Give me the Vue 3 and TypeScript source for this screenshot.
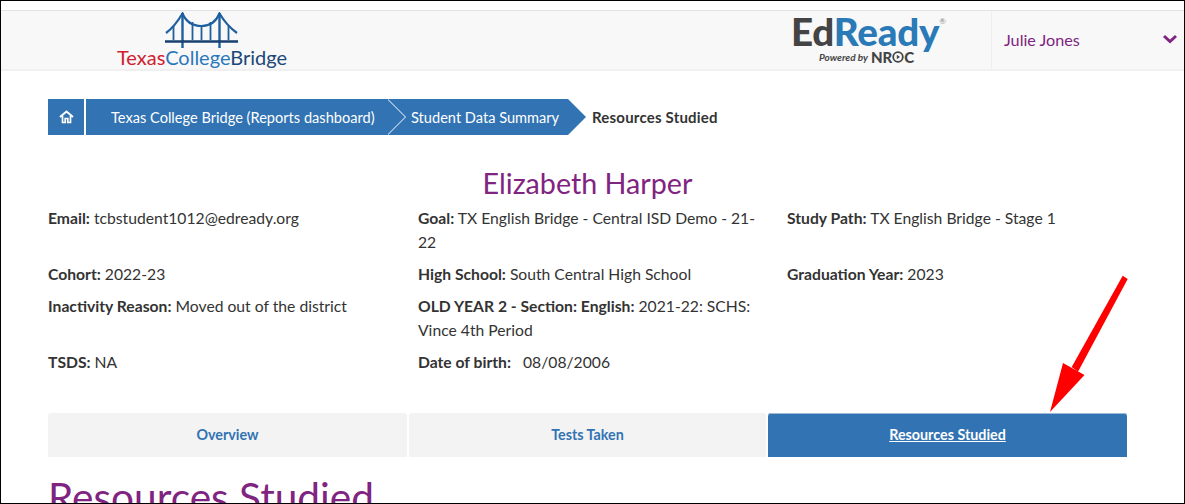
<script setup lang="ts">
import { ref } from 'vue';

interface Field {
  label: string;
  value: string;
}

const crumbs = ['Texas College Bridge (Reports dashboard)', 'Student Data Summary'];

const fields: Field[] = [
  { label: 'Email:', value: 'tcbstudent1012@edready.org' },
  { label: 'Goal:', value: 'TX English Bridge - Central ISD Demo - 21-22' },
  { label: 'Study Path:', value: 'TX English Bridge - Stage 1' },
  { label: 'Cohort:', value: '2022-23' },
  { label: 'High School:', value: 'South Central High School' },
  { label: 'Graduation Year:', value: '2023' },
  { label: 'Inactivity Reason:', value: 'Moved out of the district' },
  { label: 'OLD YEAR 2 - Section: English:', value: '2021-22: SCHS: Vince 4th Period' },
  { label: '', value: '' },
  { label: 'TSDS:', value: 'NA' },
  { label: 'Date of birth:', value: '\u00a0 08/08/2006' },
];

const tabs = ['Overview', 'Tests Taken', 'Resources Studied'];
const activeTab = ref('Resources Studied');
</script>

<template>
  <div class="page">
    <header class="topbar">
      <a class="tcb-logo">
        <svg class="bridge" width="74" height="37" viewBox="0 0 74 37" fill="none" stroke="#1f5f9e">
          <path d="M1 21 C8 16 13 9 17.5 1.5 C22 12 30 14 36.5 14 C43 14 50 12 54.5 1.5 C59 9 65 16 72 21" stroke-width="2.2" />
          <path d="M17.5 1 V36 M54.5 1 V36" stroke-width="2.4" />
          <path d="M8.500 14 V28 M27.500 10 V28 M36.500 13 V28 M45.500 10 V28 M63.500 14 V28" stroke-width="1.8" />
          <path d="M0 29.500 H73" stroke-width="2.4" stroke="#17406f" />
        </svg>
        <span class="tcb-name"><span class="red">Texas</span><span class="mid">College</span><span class="navy">Bridge</span></span>
      </a>
      <a class="edready">
        <span class="ed-word"><span class="ed">Ed</span><span class="ready">Ready</span><sup>®</sup></span>
        <span class="powered">
          <em>Powered by</em>
          <b>NR<svg width="12" height="12" viewBox="0 0 12 12"><circle cx="6" cy="6" r="4.800" fill="none" stroke="#444" stroke-width="1.800" /><path d="M4.800 3.800 L8 6 L4.800 8.200Z" fill="#444" /></svg>C</b>
        </span>
      </a>
      <div class="user">
        <span>Julie Jones</span>
        <svg width="14" height="10" viewBox="0 0 14 10" fill="none" stroke="#7f2480" stroke-width="3">
          <path d="M1 2 L7 7.500 L13 2" />
        </svg>
      </div>
    </header>

    <main class="content">
      <nav class="crumbs">
        <a class="crumb home">
          <svg width="15" height="14" viewBox="0 0 15 14" fill="none" stroke="#fff" stroke-width="2">
            <path d="M1 7 L7.500 1.500 L14 7" />
            <path d="M3.500 6 V12.500 H6.200 V8.500 H8.800 V12.500 H11.500 V6" stroke-width="1.700" />
          </svg>
        </a>
        <a v-for="c in crumbs" :key="c" class="crumb link">{{ c }}</a>
        <span class="current">Resources Studied</span>
      </nav>

      <h2 class="student">Elizabeth Harper</h2>

      <div class="fields">
        <div v-for="(f, i) in fields" :key="i" class="field">
          <b v-if="f.label">{{ f.label }}</b> {{ f.value }}
        </div>
      </div>

      <div class="tabs">
        <a v-for="t in tabs" :key="t" class="tab" :class="{ active: t === activeTab }">{{ t }}</a>
      </div>

      <h1 class="title">Resources Studied</h1>
    </main>

    <svg class="arrow" width="90" height="145" viewBox="0 0 90 145">
      <path d="M83.700 0.700 L88.700 4 L39 96.700 L32.700 92Z" fill="#f00" />
      <path d="M24 88 L45.500 100 L11 137Z" fill="#f00" />
    </svg>
  </div>
</template>

<style>
html,
body {
  margin: 0;
  overflow: hidden;
}
</style>

<style scoped>
.page {
  position: relative;
  box-sizing: border-box;
  width: 1185px;
  height: 504px;
  overflow: hidden;
  border: 1px solid #000;
  background: #fff;
  font-family: Lato, "Open Sans", sans-serif;
  color: #333;
  font-size: 15.700px;
  padding-top: 9px;
}

.topbar {
  display: flex;
  align-items: stretch;
  height: 58px;
  background: #f8f8f8;
  border-top: 1px solid #e2e2e2;
  border-bottom: 2px solid #f0f0f0;
}

.tcb-logo {
  display: flex;
  flex-direction: column;
  align-items: center;
  width: 170px;
  margin-left: 116px;
  padding-top: 1px;
}

.bridge {
  display: block;
  margin-bottom: -3px;
}

.tcb-name {
  font-size: 20px;
  line-height: 22px;
  font-weight: 400;
  white-space: nowrap;
}

.red { color: #cf2030; }
.mid { color: #2b78bb; }
.navy { color: #1c4778; }

.edready {
  display: flex;
  flex-direction: column;
  margin-left: 504px;
  width: 200px;
}

.ed-word {
  font-size: 38.500px;
  line-height: 36px;
  font-weight: 900;
  letter-spacing: -0.2px;
  white-space: nowrap;
  margin-top: 2px;
}

.ed-word sup {
  font-size: 8px;
  font-weight: 400;
  color: #888;
  vertical-align: 22px;
  line-height: 0;
}

.ed { color: #444; }
.ready { color: #2a7ab8; }

.powered {
  display: flex;
  align-items: center;
  gap: 3px;
  margin: 1px 0 0 28px;
  color: #444;
  line-height: 14px;
}

.powered em {
  font-size: 10px;
  font-weight: 700;
}

.powered b {
  display: flex;
  align-items: center;
  font-size: 15px;
  font-weight: 900;
}

.user {
  display: flex;
  align-items: center;
  justify-content: space-between;
  flex: 1;
  padding: 0 7px 2px 12px;
  border-left: 1px solid #eee;
  color: #7f2480;
  font-size: 16.200px;
  font-weight: 400;
}

.content {
  padding: 28px 57px 0 47px;
}

.crumbs {
  display: flex;
  align-items: center;
  height: 36px;
  font-size: 14.600px;
}

.crumb {
  display: flex;
  align-items: center;
  height: 36px;
  background: #3173b3;
  color: #fff;
}

.home {
  justify-content: center;
  width: 36px;
  margin-right: 2px;
}

.link {
  position: relative;
  white-space: nowrap;
  padding-right: 10px;
}

.link:nth-of-type(2) {
  width: 301px;
  box-sizing: border-box;
  padding-left: 25px;
}

.link:nth-of-type(3) {
  width: 181px;
  box-sizing: border-box;
  padding-left: 24px;
  margin-right: 24px;
}

.link:nth-of-type(2)::after,
.link:nth-of-type(3)::after {
  content: "";
  position: absolute;
  top: 0;
  left: 100%;
  z-index: 1;
  border-left: 18px solid #3173b3;
  border-top: 18px solid transparent;
  border-bottom: 18px solid transparent;
}

.link:nth-of-type(2)::before {
  content: "";
  position: absolute;
  top: 0;
  left: calc(100% + 1px);
  z-index: 1;
  border-left: 18px solid #fff;
  border-top: 18px solid transparent;
  border-bottom: 18px solid transparent;
}

.current {
  font-size: 15px;
  font-weight: 700;
  letter-spacing: 0.2px;
}

.student {
  margin: 32px 0 0;
  text-align: center;
  font-size: 28.700px;
  line-height: 32px;
  font-weight: 400;
  color: #7f2480;
}

.fields {
  display: grid;
  grid-template-columns: 370px 369px 340px;
  row-gap: 8px;
  margin-top: 7px;
  line-height: 24px;
}

.field {
  padding-right: 22px;
}

.field b {
  font-weight: 700;
}

.tabs {
  display: grid;
  grid-template-columns: 359px 357px 359px;
  gap: 2px;
  margin-top: 39px;
}

.tab {
  display: flex;
  align-items: center;
  justify-content: center;
  box-sizing: border-box;
  height: 44px;
  padding-bottom: 2px;
  background: #f3f3f3;
  border-radius: 3px 3px 0 0;
  color: #3173b3;
  font-size: 14.300px;
  font-weight: 700;
}

.tab.active {
  background: #3173b3;
  color: #fff;
  text-decoration: underline;
  box-shadow: inset 0 1px 0 #9dbbd8;
}

.title {
  margin: 15px 0 0;
  font-size: 40.600px;
  line-height: 50px;
  font-weight: 400;
  color: #7f2480;
}

.arrow {
  position: absolute;
  left: 1038px;
  top: 274px;
}
</style>
